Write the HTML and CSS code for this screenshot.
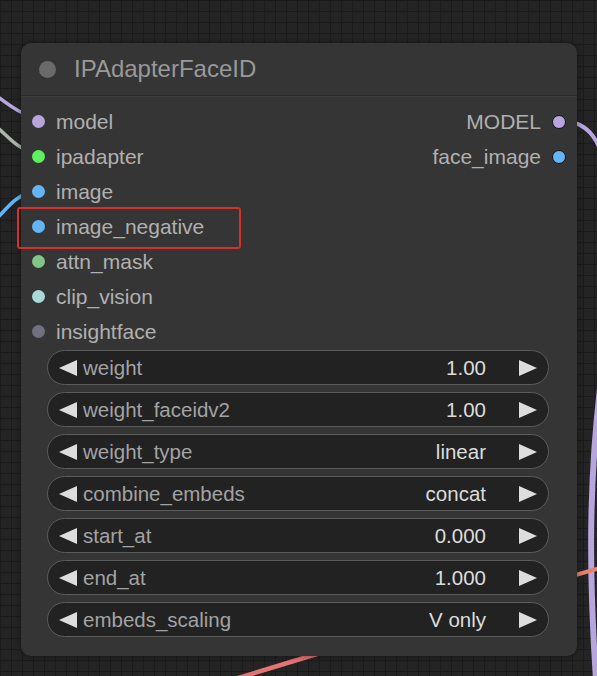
FILE: index.html
```html
<!DOCTYPE html>
<html lang="en">
<head>
<meta charset="utf-8">
<title>IPAdapterFaceID</title>
<link rel="stylesheet" href="styles.css">
</head>
<body>
<div class="canvas">
  <svg class="wires" width="597" height="676" viewBox="0 0 597 676" xmlns="http://www.w3.org/2000/svg">
    <path d="M -10 92 C 5 100, 12 110, 30 116" stroke="#b7a6de" stroke-width="3.5" fill="none"/>
    <path d="M -10 122 C 5 132, 12 145, 30 152" stroke="#a9b7a9" stroke-width="3.5" fill="none"/>
    <path d="M -10 225 C 5 212, 12 198, 30 192" stroke="#64b5f6" stroke-width="3.5" fill="none"/>
    <path d="M 566 121 C 585 123, 596 135, 602 155" stroke="#b7a6de" stroke-width="4" fill="none"/>
    <path d="M 601 380 C 590 470, 588 560, 596 680" stroke="#b7a6de" stroke-width="6" fill="none"/>
    <path d="M 225 682 L 330 650" stroke="#e57373" stroke-width="4.5" fill="none"/>
    <path d="M 565 578 L 600 568" stroke="#e8806e" stroke-width="4" fill="none"/>
  </svg>

  <div class="node">
    <div class="node-title">
      <span class="title-dot"></span>
      <span class="title-text">IPAdapterFaceID</span>
    </div>
    <div class="slots">
      <div class="inputs">
        <div class="slot"><span class="dot c-model"></span><span class="slot-label">model</span></div>
        <div class="slot"><span class="dot c-ipadapter"></span><span class="slot-label">ipadapter</span></div>
        <div class="slot"><span class="dot c-image"></span><span class="slot-label">image</span></div>
        <div class="slot highlighted"><span class="dot c-image"></span><span class="slot-label">image_negative</span><span class="highlight-box"></span></div>
        <div class="slot"><span class="dot c-mask"></span><span class="slot-label">attn_mask</span></div>
        <div class="slot"><span class="dot c-clip"></span><span class="slot-label">clip_vision</span></div>
        <div class="slot"><span class="dot c-insight"></span><span class="slot-label">insightface</span></div>
      </div>
      <div class="outputs">
        <div class="slot out"><span class="slot-label">MODEL</span><span class="dot out-dot c-model"></span></div>
        <div class="slot out"><span class="slot-label">face_image</span><span class="dot out-dot c-image"></span></div>
      </div>
    </div>
    <div class="widgets">
      <div class="widget"><svg class="arrow" viewBox="0 0 18 16"><polygon points="0,8 18,0 18,16"/></svg><span class="w-label">weight</span><span class="w-value">1.00</span><svg class="arrow" viewBox="0 0 18 16"><polygon points="18,8 0,0 0,16"/></svg></div>
      <div class="widget"><svg class="arrow" viewBox="0 0 18 16"><polygon points="0,8 18,0 18,16"/></svg><span class="w-label">weight_faceidv2</span><span class="w-value">1.00</span><svg class="arrow" viewBox="0 0 18 16"><polygon points="18,8 0,0 0,16"/></svg></div>
      <div class="widget"><svg class="arrow" viewBox="0 0 18 16"><polygon points="0,8 18,0 18,16"/></svg><span class="w-label">weight_type</span><span class="w-value">linear</span><svg class="arrow" viewBox="0 0 18 16"><polygon points="18,8 0,0 0,16"/></svg></div>
      <div class="widget"><svg class="arrow" viewBox="0 0 18 16"><polygon points="0,8 18,0 18,16"/></svg><span class="w-label">combine_embeds</span><span class="w-value">concat</span><svg class="arrow" viewBox="0 0 18 16"><polygon points="18,8 0,0 0,16"/></svg></div>
      <div class="widget"><svg class="arrow" viewBox="0 0 18 16"><polygon points="0,8 18,0 18,16"/></svg><span class="w-label">start_at</span><span class="w-value">0.000</span><svg class="arrow" viewBox="0 0 18 16"><polygon points="18,8 0,0 0,16"/></svg></div>
      <div class="widget"><svg class="arrow" viewBox="0 0 18 16"><polygon points="0,8 18,0 18,16"/></svg><span class="w-label">end_at</span><span class="w-value">1.000</span><svg class="arrow" viewBox="0 0 18 16"><polygon points="18,8 0,0 0,16"/></svg></div>
      <div class="widget"><svg class="arrow" viewBox="0 0 18 16"><polygon points="0,8 18,0 18,16"/></svg><span class="w-label">embeds_scaling</span><span class="w-value">V only</span><svg class="arrow" viewBox="0 0 18 16"><polygon points="18,8 0,0 0,16"/></svg></div>
    </div>
  </div>
</div>
</body>
</html>
```
FILE: styles.css
```css
html, body {
  margin: 0;
  padding: 0;
  width: 597px;
  height: 676px;
  overflow: hidden;
  background: #222222;
}

.canvas {
  position: relative;
  width: 597px;
  height: 676px;
  box-sizing: border-box;
  padding: 43px 0 0 21px;
  background-color: #242424;
  background-image:
    linear-gradient(to right, #1b1b1b 1px, transparent 1px),
    linear-gradient(to bottom, #1b1b1b 1px, transparent 1px);
  background-size: 11px 11px;
  font-family: "Liberation Sans", Arial, sans-serif;
}

.wires {
  position: absolute;
  left: 0;
  top: 0;
}

.node {
  position: relative;
  width: 556px;
  height: 613px;
  box-sizing: border-box;
  background: #353535;
  border-radius: 10px;
  box-shadow: 0 0 6px rgba(0, 0, 0, 0.45);
}

.node-title {
  display: flex;
  align-items: center;
  height: 52px;
  padding-left: 18px;
  border-bottom: 1px solid #2a2a2a;
  box-shadow: 0 1px 0 #3b3b3b;
}

.title-dot {
  width: 17px;
  height: 17px;
  border-radius: 50%;
  background: #6a6a6a;
  margin-right: 18px;
}

.title-text {
  color: #999999;
  font-size: 24px;
}

.slots {
  display: flex;
  justify-content: space-between;
  padding-top: 8px;
}

.inputs, .outputs {
  display: flex;
  flex-direction: column;
}

.slot {
  position: relative;
  display: flex;
  align-items: center;
  height: 35px;
  padding-left: 11px;
  gap: 11px;
  color: #b0b0b0;
  font-size: 21px;
}

.slot.out {
  justify-content: flex-end;
  padding-left: 0;
  padding-right: 11px;
}

.dot {
  width: 13px;
  height: 13px;
  border-radius: 50%;
  flex: none;
}

.out-dot {
  width: 12px;
  height: 12px;
  border: 1.5px solid #141414;
}

.c-model { background: #b7a6de; }
.c-ipadapter { background: #5ef05e; }
.c-image { background: #64b5f6; }
.c-mask { background: #81c784; }
.c-clip { background: #a8dadc; }
.c-insight { background: #707080; }

.highlight-box {
  position: absolute;
  left: -4.5px;
  top: -2px;
  width: 224px;
  height: 42px;
  box-sizing: border-box;
  border: 2.5px solid #d6302a;
  border-radius: 3px;
}

.widgets {
  display: flex;
  flex-direction: column;
  gap: 7px;
  margin: 1px 28px 0 26px;
}

.widget {
  display: flex;
  align-items: center;
  height: 35px;
  box-sizing: border-box;
  padding: 0 11px;
  background: #222222;
  border: 1.5px solid #5c5c5c;
  border-radius: 18px;
  font-size: 20.5px;
}

.arrow {
  width: 18px;
  height: 16px;
  fill: #dddddd;
  flex: none;
}

.w-label {
  color: #a3a3a3;
  margin-left: 6px;
  flex: 1;
}

.w-value {
  color: #dcdcdc;
  margin-right: 33px;
}
```
